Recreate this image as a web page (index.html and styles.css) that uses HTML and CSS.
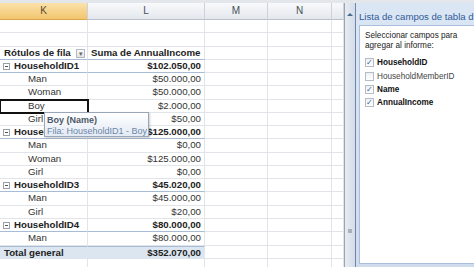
FILE: index.html
```html
<!DOCTYPE html>
<html lang="es">
<head>
    <meta charset="UTF-8">
    <meta name="viewport" content="width=device-width, initial-scale=1.0">
    <title>Tabla dinámica</title>
    <link rel="stylesheet" href="styles.css">
</head>
<body>
<div class="window">
    <div class="sheet">
        <div class="colheads">
            <div class="ch sel">K</div>
            <div class="ch">L</div>
            <div class="ch">M</div>
            <div class="ch">N</div>
            <div class="ch"></div>
        </div>
        <div class="rows">
            <div class="row"><div class="c"></div><div class="c"></div><div class="c"></div><div class="c"></div><div class="c"></div></div>
            <div class="row"><div class="c"></div><div class="c"></div><div class="c"></div><div class="c"></div><div class="c"></div></div>
            <div class="row hdr">
                <div class="c k">Rótulos de fila <span class="drop">▾</span></div>
                <div class="c l">Suma de AnnualIncome</div>
                <div class="c"></div><div class="c"></div><div class="c"></div>
            </div>
            <div class="row grp">
                <div class="c k"><span class="minus"></span>HouseholdID1</div>
                <div class="c l num">$102.050,00</div>
                <div class="c"></div><div class="c"></div><div class="c"></div>
            </div>
            <div class="row item"><div class="c k">Man</div><div class="c l num">$50.000,00</div><div class="c"></div><div class="c"></div><div class="c"></div></div>
            <div class="row item"><div class="c k">Woman</div><div class="c l num">$50.000,00</div><div class="c"></div><div class="c"></div><div class="c"></div></div>
            <div class="row item"><div class="c k active">Boy</div><div class="c l num">$2.000,00</div><div class="c"></div><div class="c"></div><div class="c"></div></div>
            <div class="row item"><div class="c k">Girl</div><div class="c l num">$50,00</div><div class="c"></div><div class="c"></div><div class="c"></div></div>
            <div class="row grp">
                <div class="c k"><span class="minus"></span>HouseholdID2</div>
                <div class="c l num">$125.000,00</div>
                <div class="c"></div><div class="c"></div><div class="c"></div>
            </div>
            <div class="row item"><div class="c k">Man</div><div class="c l num">$0,00</div><div class="c"></div><div class="c"></div><div class="c"></div></div>
            <div class="row item"><div class="c k">Woman</div><div class="c l num">$125.000,00</div><div class="c"></div><div class="c"></div><div class="c"></div></div>
            <div class="row item"><div class="c k">Girl</div><div class="c l num">$0,00</div><div class="c"></div><div class="c"></div><div class="c"></div></div>
            <div class="row grp">
                <div class="c k"><span class="minus"></span>HouseholdID3</div>
                <div class="c l num">$45.020,00</div>
                <div class="c"></div><div class="c"></div><div class="c"></div>
            </div>
            <div class="row item"><div class="c k">Man</div><div class="c l num">$45.000,00</div><div class="c"></div><div class="c"></div><div class="c"></div></div>
            <div class="row item"><div class="c k">Girl</div><div class="c l num">$20,00</div><div class="c"></div><div class="c"></div><div class="c"></div></div>
            <div class="row grp">
                <div class="c k"><span class="minus"></span>HouseholdID4</div>
                <div class="c l num">$80.000,00</div>
                <div class="c"></div><div class="c"></div><div class="c"></div>
            </div>
            <div class="row item"><div class="c k">Man</div><div class="c l num">$80.000,00</div><div class="c"></div><div class="c"></div><div class="c"></div></div>
            <div class="row total">
                <div class="c k">Total general</div>
                <div class="c l num">$352.070,00</div>
                <div class="c"></div><div class="c"></div><div class="c"></div>
            </div>
            <div class="row"><div class="c"></div><div class="c"></div><div class="c"></div><div class="c"></div><div class="c"></div></div>
        </div>

        <div class="tooltip">
            <b>Boy (Name)</b>
            <span>Fila: HouseholdID1 - Boy</span>
        </div>
    </div>

    <div class="splitter">
        <span class="up"></span>
        <span class="grip"></span>
    </div>

    <div class="pane">
        <div class="pane-title">Lista de campos de tabla dinámica</div>
        <div class="pane-body">
            <p>Seleccionar campos para agregar al informe:</p>
            <ul class="fields">
                <li class="on"><span class="box">✓</span>HouseholdID</li>
                <li><span class="box"></span>HouseholdMemberID</li>
                <li class="on"><span class="box">✓</span>Name</li>
                <li class="on"><span class="box">✓</span>AnnualIncome</li>
            </ul>
        </div>
    </div>
</div>
</body>
</html>
```

FILE: styles.css
```css
body {
    margin: 0;
    background-color: #fff;
    font-family: "Liberation Sans", Arial, sans-serif;
    overflow: hidden;
}
.window {
    display: flex;
    width: 474px;
    height: 267px;
    border-top: 3px solid #e3e6ea;
    box-sizing: border-box;
}
.sheet {
    position: relative;
    width: 344px;
    flex: none;
}
.colheads {
    display: grid;
    grid-template-columns: 88px 117px 63px 64px 12px;
    height: 17px;
}
.ch {
    background: linear-gradient(#f8f9fb, #e4e8ee);
    border-right: 1px solid #cdd3db;
    border-bottom: 1px solid #b8c0cb;
    color: #4a4f57;
    font-size: 10px;
    text-align: center;
    line-height: 16px;
}
.ch.sel {
    background: linear-gradient(#fbe2ab, #f2c56e);
    border-bottom-color: #d9a84d;
    color: #5b4a2c;
}
.row {
    display: grid;
    grid-template-columns: 88px 117px 63px 64px 12px;
    height: 13.28px;
    font-size: 9.7px;
    color: #222;
}
.c {
    box-sizing: border-box;
    border-right: 1px solid #e1e4e8;
    border-bottom: 1px solid #e1e4e8;
    white-space: nowrap;
    line-height: 12.3px;
    position: relative;
}
.k {
    padding-left: 4px;
}
.num {
    text-align: right;
    padding-right: 3px;
}
.item .k {
    padding-left: 28px;
    color: #333;
}
.item .l {
    color: #333;
}
.hdr .c.k,
.hdr .c.l {
    font-weight: bold;
    border-bottom-color: #a8bcd6;
}
.hdr .l {
    padding-left: 3px;
}
.drop {
    position: absolute;
    left: 76px;
    top: 2px;
    width: 9px;
    height: 9px;
    box-sizing: border-box;
    border: 1px solid #b4b9c0;
    background: linear-gradient(#fafafa, #dfe2e6);
    font-size: 7px;
    line-height: 7px;
    text-align: center;
    color: #666;
    font-weight: normal;
}
.grp .k,
.grp .l {
    font-weight: bold;
    border-bottom-color: #a8bcd6;
}
.grp .k {
    padding-left: 14px;
}
.minus {
    position: absolute;
    left: 3px;
    top: 3px;
    width: 7px;
    height: 7px;
    box-sizing: border-box;
    border: 1px solid #9aa0a8;
    background: #fff;
}
.minus::after {
    content: "";
    position: absolute;
    left: 1px;
    top: 2px;
    width: 3px;
    height: 1px;
    background: #555;
}
.total .k,
.total .l {
    font-weight: bold;
    background-color: #dce6f1;
    border-top: 1px solid #a8bcd6;
    border-bottom-color: #dce6f1;
    line-height: 11.3px;
}
.active {
    outline: 2px solid #111;
    outline-offset: -1px;
    z-index: 1;
}
.tooltip {
    position: absolute;
    left: 44px;
    top: 109px;
    width: 105px;
    height: 25px;
    box-sizing: border-box;
    border: 1px solid #98a6b8;
    background: linear-gradient(#ffffff, #e3eaf4);
    box-shadow: 1px 1px 2px rgba(0, 0, 0, 0.2);
    padding: 2px 0 0 2px;
    font-size: 9px;
    line-height: 11px;
    white-space: nowrap;
    z-index: 2;
}
.tooltip b {
    display: block;
    color: #4c5866;
}
.tooltip span {
    display: block;
    color: #6b86a8;
}
.splitter {
    position: relative;
    width: 12px;
    flex: none;
    border-left: 1px solid #9aa5b4;
    border-right: 1px solid #6d86a9;
    box-sizing: border-box;
    background: linear-gradient(90deg, #e7ecf2, #d4dce7);
}
.up {
    position: absolute;
    left: 2px;
    top: 10px;
    width: 0;
    height: 0;
    border-left: 3px solid transparent;
    border-right: 3px solid transparent;
    border-bottom: 3px solid #4b6a93;
}
.grip {
    position: absolute;
    left: 3px;
    top: 226px;
    width: 4px;
    height: 4px;
    background: #a9b0b9;
}
.pane {
    flex: 1;
    display: flex;
    flex-direction: column;
    background: linear-gradient(#dbe6f4, #cfdcee);
    overflow: hidden;
    padding-bottom: 3px;
}
.pane-title {
    color: #2e5a98;
    font-size: 9.6px;
    white-space: nowrap;
    overflow: hidden;
    padding: 8px 0 0 3px;
    height: 22px;
    box-sizing: border-box;
}
.pane-body {
    flex: 1;
    margin-left: 3px;
    background: #fff;
    border: 1px solid #a9bfdc;
    border-right: none;
    padding: 5px 0 0 5px;
    font-size: 8.2px;
    color: #222;
}
.pane-body p {
    margin: 0;
    width: 98px;
    line-height: 10px;
}
.fields {
    list-style: none;
    margin: 5px 0 0;
    padding: 0;
}
.fields li {
    display: flex;
    align-items: center;
    height: 13.4px;
    color: #444;
    white-space: nowrap;
}
.fields li.on {
    font-weight: bold;
    color: #111;
}
.box {
    width: 9px;
    height: 9px;
    box-sizing: border-box;
    border: 1px solid #b3bcc8;
    background: linear-gradient(#eef1f5, #fff);
    margin-right: 3px;
    font-size: 8px;
    line-height: 7px;
    text-align: center;
    color: #3d5f8f;
    font-weight: normal;
}
```
